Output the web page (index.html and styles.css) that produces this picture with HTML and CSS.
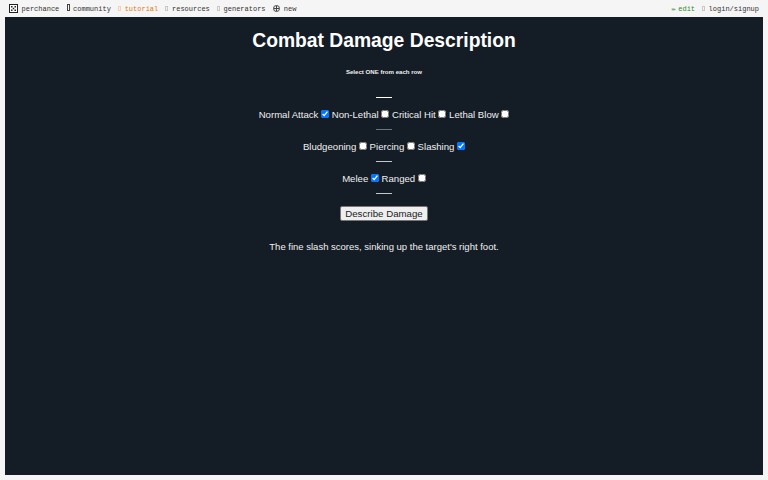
FILE: index.html
```html
<!DOCTYPE html>
<html lang="en">
  <head>
    <meta charset="UTF-8" />
    <title>Combat Damage Description</title>
    <link rel="stylesheet" href="styles.css">
  </head>
  <body>
    <div class="topBar">
      <a class="navItem">
        <svg class="diceIcon" width="9" height="9" viewBox="0 0 9 9">
          <rect x="0.5" y="0.5" width="8" height="8" fill="#fff" stroke="#222" />
          <rect x="2" y="2" width="1.5" height="1.5" fill="#222" />
          <rect x="5.5" y="2" width="1.5" height="1.5" fill="#222" />
          <rect x="3.75" y="3.75" width="1.5" height="1.5" fill="#222" />
          <rect x="2" y="5.5" width="1.5" height="1.5" fill="#222" />
          <rect x="5.5" y="5.5" width="1.5" height="1.5" fill="#222" />
        </svg>
        perchance
      </a>
      <a class="navItem"><span class="tofu darkTofu"></span>community</a>
      <a class="navItem tutorial"><span class="tofu orangeTofu"></span>tutorial</a>
      <a class="navItem"><span class="tofu"></span>resources</a>
      <a class="navItem"><span class="tofu"></span>generators</a>
      <a class="navItem newLink">
        <svg class="plusIcon" width="7" height="7" viewBox="0 0 7 7">
          <circle cx="3.5" cy="3.5" r="3" fill="none" stroke="#444" />
          <path d="M3.5 1v5M1 3.5h5" stroke="#444" />
        </svg>
        new
      </a>
      <div class="rightLinks">
        <a class="navItem editLink"><span class="pencil">✏</span>edit</a>
        <a class="navItem"><span class="tofu"></span>login/signup</a>
      </div>
    </div>
    <div class="output">
      <h1 class="topTitle">Combat Damage Description</h1>
      <p class="hint">Select ONE from each row</p>
      <hr class="rule firstRule" />
      <div class="choiceRow">
        Normal Attack <input type="checkbox" checked /> Non-Lethal <input type="checkbox" /> Critical Hit <input type="checkbox" /> Lethal Blow <input type="checkbox" />
      </div>
      <hr class="rule dimRule" />
      <div class="choiceRow">
        Bludgeoning <input type="checkbox" /> Piercing <input type="checkbox" /> Slashing <input type="checkbox" checked />
      </div>
      <hr class="rule midRule" />
      <div class="choiceRow">
        Melee <input type="checkbox" checked /> Ranged <input type="checkbox" />
      </div>
      <hr class="rule midRule" />
      <button class="describeBtn">Describe Damage</button>
      <p class="result">The fine slash scores, sinking up the target's right foot.</p>
    </div>
  </body>
</html>
```
FILE: styles.css
```css
body {
  margin: 0;
  height: 480px;
  overflow: hidden;
  background-color: #f5f5f5;
  display: flex;
  flex-direction: column;
}
.topBar {
  height: 17px;
  padding: 0 9px;
  display: flex;
  align-items: center;
  gap: 7.25px;
  font-family: "Liberation Mono", monospace;
  font-size: 7px;
  color: #333;
}
.navItem {
  display: flex;
  align-items: center;
  gap: 3.5px;
}
.tutorial {
  color: #e07b20;
}
.editLink {
  color: #2a8a2a;
  gap: 2.5px;
}
.newLink {
  gap: 4px;
}
.pencil {
  font-size: 7px;
}
.tofu {
  width: 3px;
  height: 5px;
  box-sizing: border-box;
  border: 1px solid #c8c8c8;
}
.darkTofu {
  height: 7px;
  margin-top: -2px;
  border-color: #444;
}
.orangeTofu {
  border-color: #f4d2b0;
}
.rightLinks {
  margin-left: auto;
  display: flex;
  gap: 7px;
}
.output {
  width: 758px;
  height: 458px;
  margin-left: 5px;
  background-color: #141c26;
  color: #f0f0f0;
  font-family: "Liberation Sans", sans-serif;
  font-size: 9.5px;
  text-align: center;
}
.topTitle {
  margin: 12px 0 0;
  font-size: 19.3px;
  line-height: 23px;
  color: white;
}
.hint {
  margin: 16px 0 0;
  font-size: 6.1px;
  font-weight: bold;
  line-height: 7px;
}
.rule {
  width: 16px;
  height: 1px;
  margin: 6px auto 9px;
  border: 0;
  background-color: white;
}
.firstRule {
  margin-top: 22px;
}
.dimRule {
  background-color: #6f757c;
}
.midRule {
  background-color: #c4c6c9;
}
.choiceRow {
  height: 16px;
  line-height: 16px;
  font-size: 9.6px;
}
.choiceRow input {
  width: 8px;
  height: 8px;
  margin: 0;
}
.describeBtn {
  margin-top: 3px;
  height: 15px;
  padding: 0 4px;
  font-family: "Liberation Sans", sans-serif;
  font-size: 9.7px;
  color: #222;
  background-color: #efefef;
  border: 1px solid #767676;
  border-radius: 2px;
}
.result {
  margin: 19px 0 0;
  line-height: 13px;
}
```
